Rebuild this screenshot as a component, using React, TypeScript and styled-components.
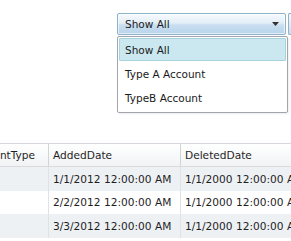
import React from "react";
import styled, { createGlobalStyle } from "styled-components";

const Global = createGlobalStyle`
  html, body { margin: 0; padding: 0; background: #ffffff; }
  body { width: 291px; height: 241px; overflow: hidden; font-family: "DejaVu Sans", Verdana, sans-serif; }
`;

const Page = styled.div`
  position: relative;
  width: 291px;
  height: 241px;
  overflow: hidden;
  display: flex;
  flex-direction: column;
`;

const ComboRow = styled.div`
  display: flex;
  padding: 13px 0 0 117px;
  height: 143px;
  flex-shrink: 0;
  box-sizing: border-box;
  position: relative;
`;

const ComboWrap = styled.div`
  position: relative;
  width: 171px;
  height: 22px;
`;

const Combo = styled.div`
  box-sizing: border-box;
  width: 100%;
  height: 22px;
  border: 1px solid #8eb2c9;
  border-radius: 2px;
  background: linear-gradient(#f6fafd 0%, #e3eef7 45%, #c9def0 55%, #b9d4ea 100%);
  display: flex;
  align-items: center;
  padding: 0 6px 0 7px;
  font-size: 10.5px;
  color: #1a1a1a;
  box-shadow: inset 0 0 0 1px rgba(255,255,255,0.6);
`;

const ComboText = styled.span`
  flex: 1;
`;

const NextEdge = styled.div`
  width: 3px;
  height: 22px;
  margin-left: 2px;
  border: 1px solid #8eb2c9;
  border-right: none;
  border-radius: 2px 0 0 2px;
  box-sizing: border-box;
  background: linear-gradient(#f6fafd, #c9def0);
`;

const Popup = styled.div`
  position: absolute;
  top: 23px;
  left: 0;
  width: 171px;
  height: 77px;
  box-sizing: border-box;
  border: 1px solid #a0a6ab;
  border-radius: 2px;
  background: #ffffff;
  padding: 1px;
  display: flex;
  flex-direction: column;
  box-shadow: 1px 1px 2px rgba(0,0,0,0.08);
`;

const Item = styled.div<{ $selected?: boolean }>`
  box-sizing: border-box;
  height: 24px;
  display: flex;
  align-items: center;
  padding-left: 5px;
  font-size: 10.5px;
  color: #1a1a1a;
  border: 1px solid ${(p) => (p.$selected ? "#a6d3dd" : "transparent")};
  border-radius: 1px;
  background: ${(p) => (p.$selected ? "#cbe8f0" : "transparent")};
  margin-bottom: 1px;
`;

const Grid = styled.div`
  overflow: hidden;
  width: 291px;
  border-top: 1px solid #d5d9dd;
`;

const Track = styled.div`
  margin-left: -36px;
  display: flex;
  flex-direction: column;
`;

const Row = styled.div<{ $kind: "head" | "alt" | "plain" }>`
  display: grid;
  grid-template-columns: 85px 132px 150px;
  height: ${(p) => (p.$kind === "head" ? "22px" : "23.5px")};
  background: ${(p) =>
    p.$kind === "head"
      ? "linear-gradient(#ffffff, #f1f3f5)"
      : p.$kind === "alt"
      ? "#eef1f4"
      : "#ffffff"};
  border-bottom: ${(p) => (p.$kind === "head" ? "1px solid #d8dcdf" : "none")};
`;

const Cell = styled.div<{ $head?: boolean; $hidden?: boolean }>`
  display: flex;
  align-items: center;
  padding-left: 4px;
  font-size: 10.6px;
  color: ${(p) => (p.$hidden ? "transparent" : "#1f1f1f")};
  white-space: nowrap;
  overflow: hidden;
  border-right: 1px solid ${(p) => (p.$head ? "#cfd4d8" : "#dfe3e6")};
  box-sizing: border-box;
`;

const Arrow = () => (
  <svg width="7" height="4" viewBox="0 0 7 4">
    <path d="M0 0 H7 L3.5 4 Z" fill="#333" />
  </svg>
);

const rows = [
  { type: "TypeA", added: "1/1/2012 12:00:00 AM", deleted: "1/1/2000 12:00:00 AM" },
  { type: "TypeB", added: "2/2/2012 12:00:00 AM", deleted: "1/1/2000 12:00:00 AM" },
  { type: "TypeA", added: "3/3/2012 12:00:00 AM", deleted: "1/1/2000 12:00:00 AM" },
];

export default function App() {
  return (
    <Page>
      <Global />
      <ComboRow>
        <ComboWrap>
          <Combo>
            <ComboText>Show All</ComboText>
            <Arrow />
          </Combo>
          <Popup>
            <Item $selected>Show All</Item>
            <Item>Type A Account</Item>
            <Item>TypeB Account</Item>
          </Popup>
        </ComboWrap>
        <NextEdge />
      </ComboRow>
      <Grid>
        <Track>
          <Row $kind="head">
            <Cell $head>AccountType</Cell>
            <Cell $head>AddedDate</Cell>
            <Cell $head>DeletedDate</Cell>
          </Row>
          {rows.map((r, i) => (
            <Row key={i} $kind={i % 2 === 0 ? "alt" : "plain"}>
              <Cell $hidden>{r.type}</Cell>
              <Cell>{r.added}</Cell>
              <Cell>{r.deleted}</Cell>
            </Row>
          ))}
        </Track>
      </Grid>
    </Page>
  );
}
